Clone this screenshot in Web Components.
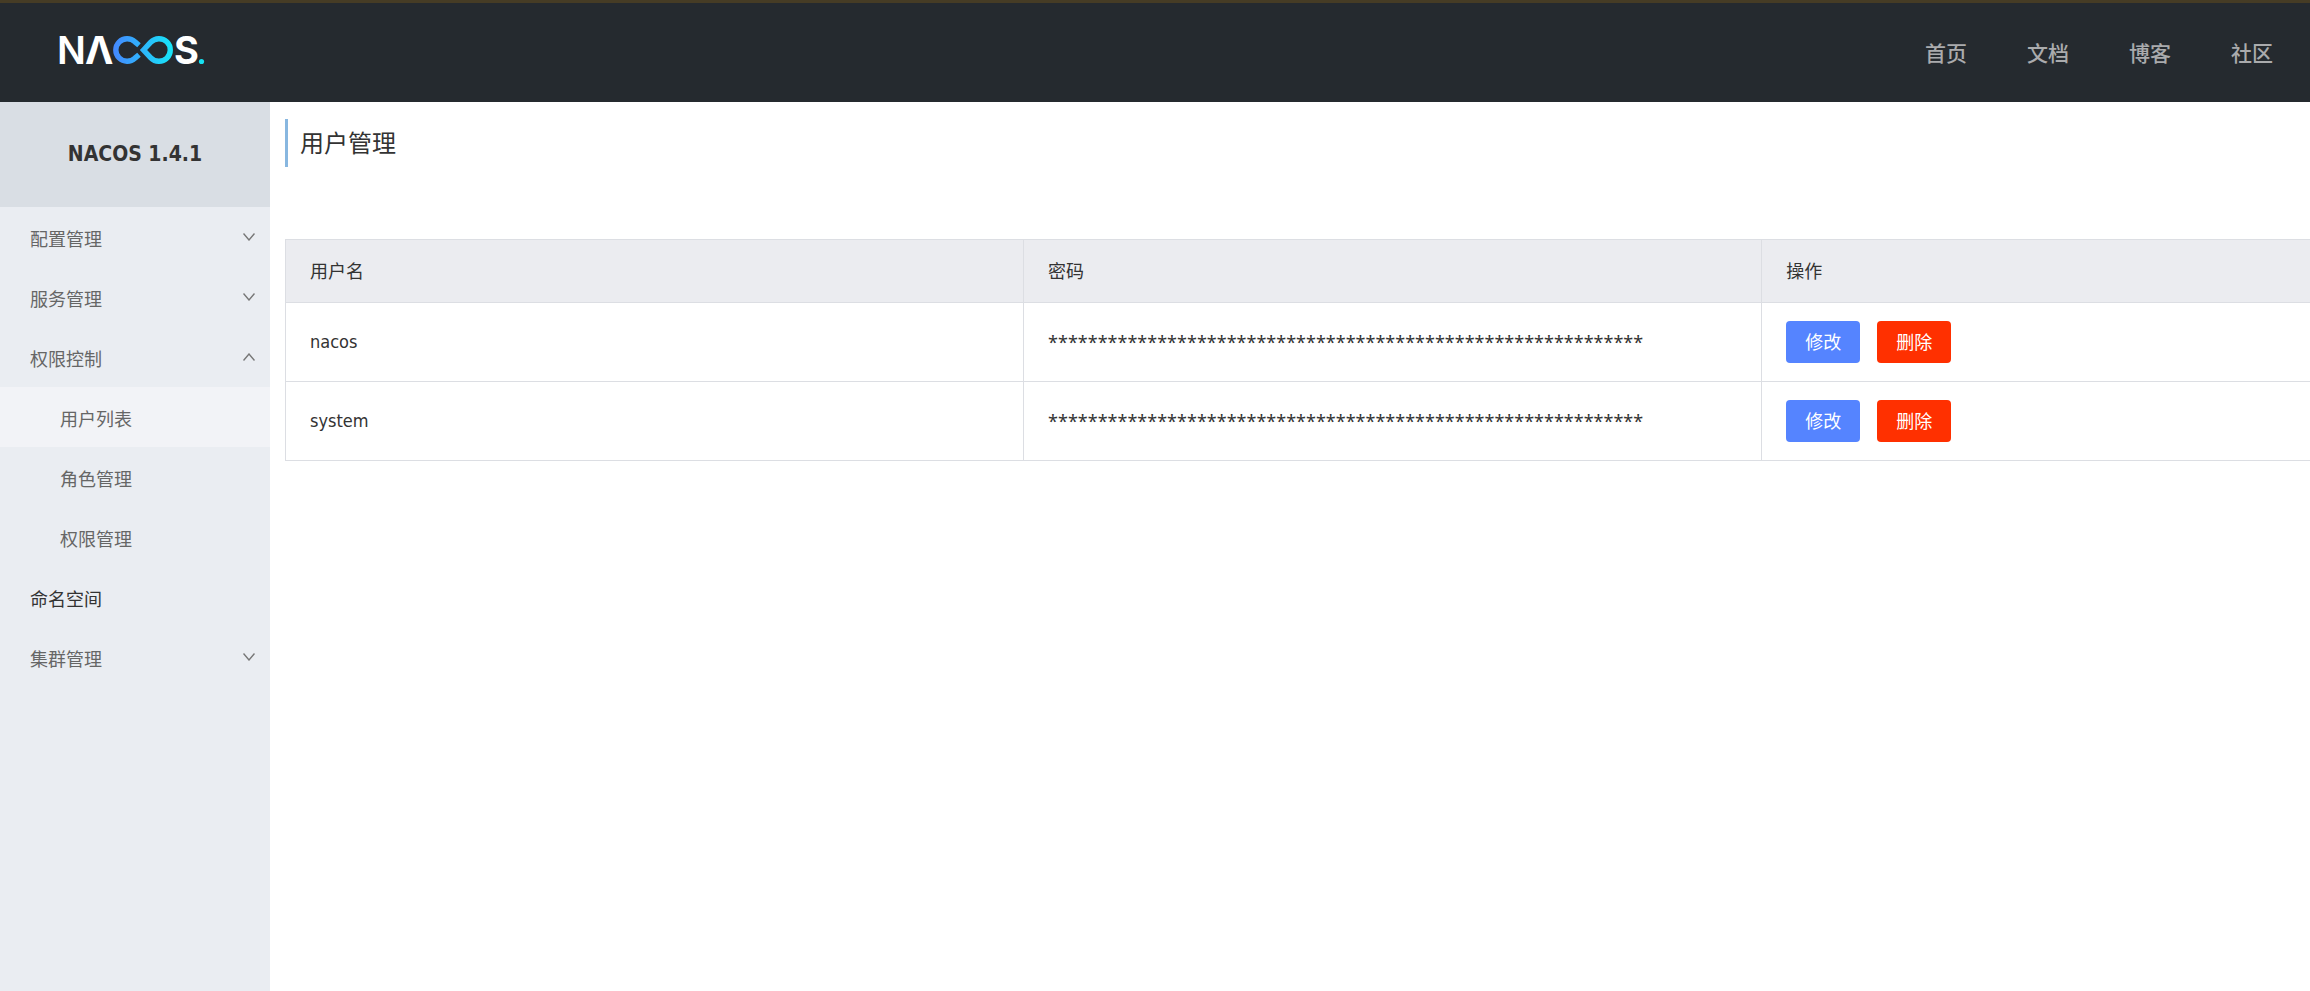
<!DOCTYPE html>
<html lang="zh-CN">
<head>
<meta charset="utf-8">
<title>Nacos</title>
<style>
    body {
        --latin-font: "DejaVu Sans Condensed", "Noto Sans CJK SC", sans-serif;
        margin: 0;
        color: #333;
        background: #fff;
        font-family: "Noto Sans", "Noto Sans CJK SC", sans-serif;
        font-size: 18px;
        line-height: 30px;
    }
</style>
</head>
<body>
<nacos-app>
    <nacos-header slot="header">
        <nav-link href="#home">首页</nav-link>
        <nav-link href="#docs">文档</nav-link>
        <nav-link href="#blog">博客</nav-link>
        <nav-link href="#community">社区</nav-link>
    </nacos-header>
    <side-menu slot="side" heading="NACOS 1.4.1">
        <menu-group label="配置管理"></menu-group>
        <menu-group label="服务管理"></menu-group>
        <menu-group label="权限控制" open>
            <menu-item sub active href="#users">用户列表</menu-item>
            <menu-item sub href="#roles">角色管理</menu-item>
            <menu-item sub href="#permissions">权限管理</menu-item>
        </menu-group>
        <menu-item href="#namespace">命名空间</menu-item>
        <menu-group label="集群管理"></menu-group>
    </side-menu>
    <page-title>用户管理</page-title>
    <user-table></user-table>
</nacos-app>

<script>
class NacosApp extends HTMLElement {
    constructor() {
        super();
        this.attachShadow({ mode: 'open' });
        this.shadowRoot.innerHTML = `
            <style>
                :host {
                    display: flex;
                    flex-direction: column;
                    min-height: 100vh;
                }
                .body {
                    display: flex;
                    flex: 1;
                }
                aside {
                    flex: none;
                    width: 270px;
                    background: #eaedf2;
                }
                main {
                    flex: 1;
                    min-width: 0;
                    padding: 17px 0 0 15px;
                }
            </style>
            <slot name="header"></slot>
            <div class="body">
                <aside><slot name="side"></slot></aside>
                <main><slot></slot></main>
            </div>
        `;
    }
}

class NacosLogo extends HTMLElement {
    constructor() {
        super();
        this.attachShadow({ mode: 'open' });
        this.shadowRoot.innerHTML = `
            <style>
                :host { display: block; }
                svg { display: block; overflow: visible; }
                text {
                    fill: #fff;
                    font-family: Inter, sans-serif;
                    font-size: 38px;
                    font-weight: 600;
                }
                .wide { font-weight: 700; }
            </style>
            <svg width="146" height="28" viewBox="0 0 146 28" role="img" aria-label="Nacos">
                <defs>
                    <linearGradient id="loop" gradientUnits="userSpaceOnUse" x1="54" y1="0" x2="113" y2="0">
                        <stop offset="0" stop-color="#4489ff"/>
                        <stop offset="1" stop-color="#16e6f8"/>
                    </linearGradient>
                </defs>
                <text x="-3" y="28">N</text>
                <text class="wide" x="25" y="28">Λ</text>
                <g fill="none" stroke="url(#loop)" stroke-width="5.4">
                    <path d="M79 9.3L75 5.9A11.3 11.3 0 1 0 75 22.1L79 18.7"/>
                    <path d="M83.5 14L90.8 6.2A11.3 11.3 0 1 1 90.8 21.8Z" stroke-linejoin="miter"/>
                </g>
                <text class="wide" x="114" y="28">S</text>
                <circle cx="141.5" cy="25.5" r="2.6" fill="#16e0f0"/>
            </svg>
        `;
    }
}

class NacosHeader extends HTMLElement {
    constructor() {
        super();
        this.attachShadow({ mode: 'open' });
        this.shadowRoot.innerHTML = `
            <style>
                :host { display: block; }
                header {
                    display: flex;
                    align-items: center;
                    justify-content: space-between;
                    box-sizing: border-box;
                    height: 102px;
                    padding: 0 37px 0 60px;
                    border-top: 3px solid #463c25;
                    background: #252a2f;
                }
                nacos-logo { margin-bottom: 5px; }
                nav {
                    display: flex;
                    gap: 60px;
                    padding-top: 2px;
                }
            </style>
            <header>
                <nacos-logo></nacos-logo>
                <nav><slot></slot></nav>
            </header>
        `;
    }
}

class NavLink extends HTMLElement {
    constructor() {
        super();
        this.attachShadow({ mode: 'open' });
    }

    connectedCallback() {
        this.shadowRoot.innerHTML = `
            <style>
                :host { display: block; }
                a {
                    color: #aaabad;
                    font-size: 21px;
                    font-weight: 500;
                    text-decoration: none;
                }
                a:hover { color: #fff; }
            </style>
            <a href="${this.getAttribute('href')}"><slot></slot></a>
        `;
    }
}

class SideMenu extends HTMLElement {
    constructor() {
        super();
        this.attachShadow({ mode: 'open' });
    }

    connectedCallback() {
        this.shadowRoot.innerHTML = `
            <style>
                :host { display: block; }
                h1 {
                    margin: 0;
                    background: #d9dee4;
                    font-family: var(--latin-font);
                    font-size: 21px;
                    line-height: 105px;
                    text-align: center;
                }
            </style>
            <h1>${this.getAttribute('heading')}</h1>
            <nav><slot></slot></nav>
        `;
    }
}

class MenuGroup extends HTMLElement {
    constructor() {
        super();
        this.attachShadow({ mode: 'open' });
    }

    connectedCallback() {
        this.shadowRoot.innerHTML = `
            <style>
                :host { display: block; }
                button {
                    display: flex;
                    align-items: center;
                    justify-content: space-between;
                    width: 100%;
                    height: 60px;
                    padding: 0 15px 0 30px;
                    border: none;
                    background: none;
                    color: #666;
                    font: inherit;
                    cursor: pointer;
                }
                span { padding-top: 4px; }
                svg {
                    fill: none;
                    stroke: #777;
                    stroke-width: 1.4;
                }
                .items { display: none; }
                :host([open]) .items { display: block; }
                :host([open]) svg { transform: rotate(180deg); }
            </style>
            <button type="button" aria-expanded="${this.hasAttribute('open')}">
                <span>${this.getAttribute('label')}</span>
                <svg width="12" height="8" viewBox="0 0 12 8"><path d="M.5 .5L6 7L11.5 .5"/></svg>
            </button>
            <div class="items"><slot></slot></div>
        `;

        const button = this.shadowRoot.querySelector('button');
        button.addEventListener('click', () => {
            this.toggleAttribute('open');
            button.setAttribute('aria-expanded', this.hasAttribute('open'));
        });
    }
}

class MenuItem extends HTMLElement {
    constructor() {
        super();
        this.attachShadow({ mode: 'open' });
    }

    connectedCallback() {
        this.shadowRoot.innerHTML = `
            <style>
                :host { display: block; }
                a {
                    display: block;
                    padding: 4px 0 0 30px;
                    color: #333;
                    line-height: 56px;
                    text-decoration: none;
                }
                :host([sub]) a {
                    padding-left: 60px;
                    color: #666;
                }
                :host([active]) a { background: #f2f3f7; }
            </style>
            <a href="${this.getAttribute('href')}"><slot></slot></a>
        `;
    }
}

class PageTitle extends HTMLElement {
    constructor() {
        super();
        this.attachShadow({ mode: 'open' });
        this.shadowRoot.innerHTML = `
            <style>
                :host {
                    display: block;
                    margin-bottom: 72px;
                }
                h2 {
                    margin: 0;
                    padding-left: 12px;
                    border-left: 3px solid #88b7e0;
                    font-size: 24px;
                    font-weight: 400;
                    line-height: 48px;
                }
            </style>
            <h2><slot></slot></h2>
        `;
    }
}

class ActionButton extends HTMLElement {
    constructor() {
        super();
        this.attachShadow({ mode: 'open' });
        this.shadowRoot.innerHTML = `
            <style>
                :host { display: block; }
                button {
                    display: block;
                    height: 42px;
                    padding: 0 19px;
                    border: none;
                    border-radius: 4px;
                    background: #5584ff;
                    color: #fff;
                    font: inherit;
                    cursor: pointer;
                }
                :host([warning]) button { background: #ff3000; }
            </style>
            <button type="button"><slot></slot></button>
        `;
    }
}

class UserTable extends HTMLElement {
    constructor() {
        super();
        this.attachShadow({ mode: 'open' });
    }

    connectedCallback() {
        const users = ['nacos', 'system'];
        const mask = '*'.repeat(60);

        const rows = users.map((name) => `
            <tr>
                <td class="name">${name}</td>
                <td>${mask}</td>
                <td>
                    <div class="actions">
                        <action-button>修改</action-button>
                        <action-button warning>删除</action-button>
                    </div>
                </td>
            </tr>
        `).join('');

        this.shadowRoot.innerHTML = `
            <style>
                :host { display: block; }
                table {
                    width: 100%;
                    table-layout: fixed;
                    border-spacing: 0;
                    border-top: 1px solid #dcdee3;
                }
                col.wide { width: 36.45%; }
                th, td {
                    padding: 0 24px;
                    border-bottom: 1px solid #dcdee3;
                    border-left: 1px solid #dcdee3;
                    text-align: left;
                }
                th {
                    height: 62px;
                    background: #ebecf0;
                    font-weight: 400;
                }
                td { height: 78px; }
                .name { font-family: var(--latin-font); }
                .actions {
                    display: flex;
                    gap: 17px;
                }
            </style>
            <table>
                <colgroup><col class="wide"><col class="wide"><col></colgroup>
                <thead>
                    <tr><th>用户名</th><th>密码</th><th>操作</th></tr>
                </thead>
                <tbody>${rows}</tbody>
            </table>
        `;
    }
}

customElements.define('nacos-app', NacosApp);
customElements.define('nacos-logo', NacosLogo);
customElements.define('nacos-header', NacosHeader);
customElements.define('nav-link', NavLink);
customElements.define('side-menu', SideMenu);
customElements.define('menu-group', MenuGroup);
customElements.define('menu-item', MenuItem);
customElements.define('page-title', PageTitle);
customElements.define('action-button', ActionButton);
customElements.define('user-table', UserTable);
</script>
</body>
</html>
